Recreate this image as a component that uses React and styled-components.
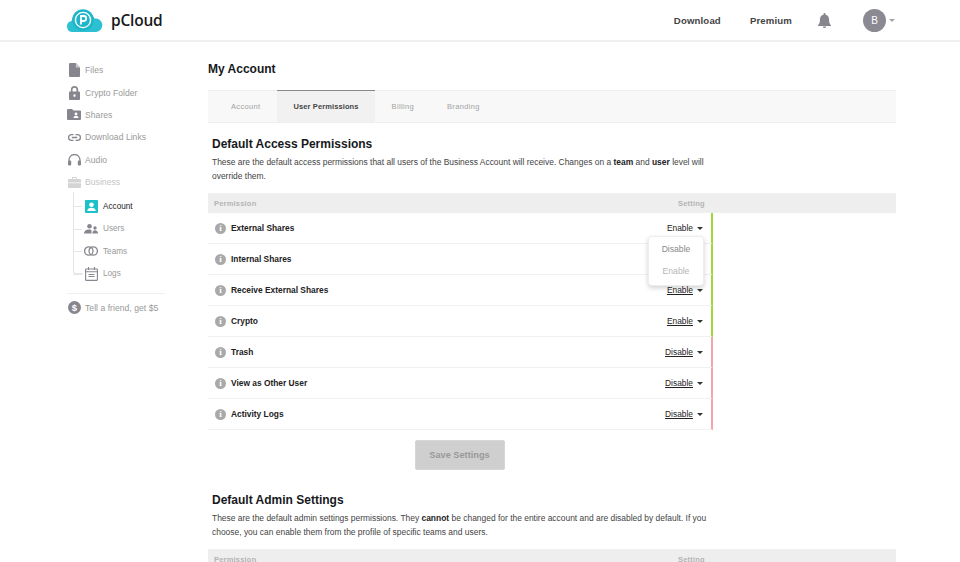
import React from 'react'
import styled, { createGlobalStyle } from 'styled-components'

const GlobalStyle = createGlobalStyle`
  html, body {
    margin: 0;
    padding: 0;
    height: 562px;
    overflow: hidden;
    background: #fff;
    font-family: "Liberation Sans", Arial, sans-serif;
  }
`

const Page = styled.div`
  width: 960px;
  height: 562px;
  overflow: hidden;
`

const Header = styled.header`
  box-sizing: border-box;
  height: 42px;
  border-bottom: 2px solid #efefef;
  display: flex;
  align-items: center;
  padding: 0 65px 0 67px;
`

const LogoBox = styled.div`
  display: flex;
  align-items: center;
  flex: 1;
  gap: 8px;
`

const LogoText = styled.span`
  font-family: "Open Sans", sans-serif;
  font-size: 15.5px;
  font-weight: 600;
  color: #17191c;
  letter-spacing: -0.2px;
  margin-top: -1px;
`

const NavLink = styled.span`
  font-size: 9.6px;
  font-weight: 700;
  color: #444;
  letter-spacing: 0.15px;
  margin-right: ${p => p.$gap}px;
`

const Bell = styled.svg`
  width: 13px;
  height: 15px;
  margin-right: 32px;
  margin-left: -1px;
  fill: #87868e;
`

const Avatar = styled.div`
  width: 23px;
  height: 23px;
  border-radius: 50%;
  background: #8b8a92;
  color: #fff;
  font-size: 10px;
  display: flex;
  align-items: center;
  justify-content: center;
`

const Caret = styled.span`
  width: 0;
  height: 0;
  border-left: ${p => p.$size || 3}px solid transparent;
  border-right: ${p => p.$size || 3}px solid transparent;
  border-top: ${p => p.$size || 3}px solid ${p => p.$color || '#333'};
  display: inline-block;
  margin-left: ${p => p.$gap || 4}px;
`

const Body = styled.div`
  display: flex;
  padding: 17px 64px 0 67px;
`

const Sidebar = styled.aside`
  width: 98px;
  margin-right: 43px;
  flex-shrink: 0;
`

const NavItem = styled.div`
  height: 22.4px;
  display: flex;
  align-items: center;
  font-size: 8.6px;
  letter-spacing: 0.03px;
  color: ${p => (p.$faded ? '#c4c4c4' : '#999')};
  gap: 4px;
`

const IconSlot = styled.span`
  width: 14px;
  height: 14px;
  display: flex;
  align-items: center;
  justify-content: center;
  flex-shrink: 0;
`

const SubNav = styled.div`
  position: relative;
  margin-left: 6px;
  padding-left: 11px;
  margin-top: 1.5px;
`

const TreeLine = styled.div`
  position: absolute;
  left: 0;
  top: -3px;
  bottom: 11px;
  width: 9px;
  border-left: 1px solid #e6e6e6;
  border-bottom: 1px solid #e6e6e6;
  border-bottom-left-radius: 3px;
`

const SubItem = styled.div`
  position: relative;
  height: 22.5px;
  display: flex;
  align-items: center;
  gap: 5px;
  font-size: 8.2px;
  color: ${p => (p.$active ? '#222' : '#999')};

  &::before {
    content: '';
    position: absolute;
    left: -11px;
    top: 50%;
    width: 9px;
    border-top: 1px solid #e6e6e6;
  }
`

const SubIcon = styled.span`
  width: 14px;
  height: 14px;
  display: flex;
  align-items: center;
  justify-content: center;
  flex-shrink: 0;
`

const Divider = styled.div`
  border-top: 1px solid #eee;
  margin: 8px 0 2.5px;
`

const Main = styled.main`
  flex: 1;
  min-width: 0;
`

const PageTitle = styled.h1`
  margin: 0;
  padding-top: 3px;
  height: 28px;
  font-size: 12px;
  line-height: 14px;
  font-weight: 700;
  color: #17191c;
`

const Tabs = styled.div`
  height: 31px;
  background: #f8f8f8;
  border-top: 1px solid #eee;
  border-bottom: 1px solid #eee;
  display: flex;
  padding-left: 6.5px;
`

const Tab = styled.div`
  box-sizing: border-box;
  height: 32px;
  margin-top: -1px;
  padding: 0 16.5px;
  display: flex;
  align-items: center;
  font-size: 7.5px;
  letter-spacing: ${p => (p.$active ? '0.1px' : '0.35px')};
  font-weight: ${p => (p.$active ? 700 : 400)};
  color: ${p => (p.$active ? '#444' : '#a3a3a3')};
  background: ${p => (p.$active ? '#f1f1f1' : 'transparent')};
  border-top: ${p => (p.$active ? '1px solid #888' : '1px solid transparent')};
`

const Section = styled.section`
  padding-top: ${p => p.$top || 0}px;
`

const SectionTitle = styled.h2`
  margin: 0;
  padding-left: 4px;
  font-size: 12px;
  line-height: 15px;
  font-weight: 700;
  color: #17191c;
`

const Intro = styled.p`
  margin: 3px 0 0;
  padding-left: 4px;
  width: 500px;
  font-size: 8.45px;
  line-height: 14px;
  color: #444;

  b {
    color: #222;
  }
`

const TableHead = styled.div`
  height: 20px;
  background: #eee;
  display: flex;
  align-items: center;
  padding-left: 6px;
  margin-top: 10px;
  font-size: 7.5px;
  font-weight: 700;
  letter-spacing: 0.2px;
  color: #b4b4b4;
`

const HeadLeft = styled.span`
  width: 464px;
`

const Rows = styled.div`
  position: relative;
  width: 505px;
`

const Row = styled.div`
  height: 30px;
  border-bottom: 1px solid #f1f1f1;
  border-right: 2px solid ${p => (p.$on ? '#a3d639' : '#f5a3ad')};
  display: flex;
  align-items: center;
  padding-left: 7px;
`

const InfoIcon = styled.span`
  width: 11px;
  height: 11px;
  border-radius: 50%;
  background: #a9a9a9;
  color: #fff;
  font-family: "Liberation Serif", serif;
  font-size: 9px;
  font-weight: 700;
  line-height: 11px;
  text-align: center;
  margin-right: 5px;
  flex-shrink: 0;
`

const RowLabel = styled.span`
  flex: 1;
  font-size: 8.4px;
  font-weight: 700;
  color: #222;
`

const Choice = styled.span`
  display: flex;
  align-items: center;
  font-size: 8.4px;
  color: #222;
  padding-right: 8px;
`

const ChoiceText = styled.span`
  text-decoration: ${p => (p.$plain ? 'none' : 'underline')};
`

const Menu = styled.div`
  position: absolute;
  left: 440px;
  top: 23px;
  width: 56px;
  height: 50px;
  padding-bottom: 2px;
  box-sizing: border-box;
  background: #fff;
  border: 1px solid #eee;
  border-radius: 4px;
  box-shadow: 0 2px 5px rgba(0, 0, 0, 0.18);
  display: flex;
  flex-direction: column;
  align-items: center;
  justify-content: center;
  gap: 12px;
  font-size: 8.6px;
`

const MenuOption = styled.span`
  color: ${p => (p.$off ? '#b5b5b5' : '#888')};
  line-height: 10px;
`

const ButtonRow = styled.div`
  width: 503px;
  display: flex;
  justify-content: center;
  margin-top: 10px;
  margin-bottom: 23px;
`

const SaveButton = styled.button`
  width: 90px;
  height: 30px;
  border: 1px solid #d6d6d6;
  border-radius: 2px;
  background: #cfcfcf;
  color: #999;
  font-family: inherit;
  font-size: 9.2px;
  font-weight: 700;
  padding: 0;
`

const icons = {
  file: <svg width="11" height="14" viewBox="0 0 12 14" preserveAspectRatio="none" fill="#87868e"><path d="M1 0h6.500L12 4.500V13a1 1 0 0 1-1 1H1a1 1 0 0 1-1-1V1a1 1 0 0 1 1-1z" /><path d="M7.500 0v4.500H12z" fill="#c9c9cd" /></svg>,
  lock: <svg width="11" height="14" viewBox="0 0 12 14" preserveAspectRatio="none" fill="#87868e"><path fillRule="evenodd" d="M1 5.500h1V4a4 4 0 0 1 8 0v1.500h1a1 1 0 0 1 1 1V13a1 1 0 0 1-1 1H1a1 1 0 0 1-1-1V6.500a1 1 0 0 1 1-1zM3.800 5.500h4.400V4a2.200 2.200 0 0 0-4.400 0zM6 8.300a1.300 1.300 0 1 0 0 2.600a1.300 1.300 0 0 0 0-2.600z" /></svg>,
  share: <svg width="14" height="11" viewBox="0 0 14 11" fill="#87868e"><path fillRule="evenodd" d="M0 1a1 1 0 0 1 1-1h4l1.500 1.500H13a1 1 0 0 1 1 1V10a1 1 0 0 1-1 1H1a1 1 0 0 1-1-1zM9 3.500a1.400 1.400 0 1 0 0 2.800a1.400 1.400 0 0 0 0-2.800zM6.500 9h5c0-1.500-1-2.200-2.500-2.200S6.500 7.500 6.500 9z" /></svg>,
  link: <svg width="13" height="7" viewBox="0 0 13 7" fill="none" stroke="#87868e" strokeWidth="1.300"><path d="M5.500 .7H3.400a2.800 2.800 0 0 0 0 5.600h2.100M7.500 .7h2.100a2.800 2.800 0 0 1 0 5.600H7.500M3.800 3.500h5.400" /></svg>,
  audio: <svg width="13" height="12" viewBox="0 0 13 12" fill="#87868e"><path d="M1 7V6a5.500 5.500 0 0 1 11 0v1" fill="none" stroke="#87868e" strokeWidth="1.300" /><rect x="0" y="6.500" width="3.200" height="5" rx="1" /><rect x="9.800" y="6.500" width="3.200" height="5" rx="1" /></svg>,
  business: <svg width="13" height="11" viewBox="0 0 13 11" fill="#d4d4d4"><path fillRule="evenodd" d="M4 2V1a1 1 0 0 1 1-1h3a1 1 0 0 1 1 1v1h3a1 1 0 0 1 1 1v2.500H0V3a1 1 0 0 1 1-1zM5 1v1h3V1zM0 6.300h13V10a1 1 0 0 1-1 1H1a1 1 0 0 1-1-1z" /></svg>,
  account: <svg width="13" height="13" viewBox="0 0 13 13"><rect width="13" height="13" rx="1" fill="#1cc0c9" /><circle cx="6.500" cy="4.700" r="2.300" fill="#fff" /><path d="M2.300 11c0-2.200 1.900-3.300 4.200-3.300s4.200 1.100 4.200 3.300z" fill="#fff" /></svg>,
  users: <svg width="14" height="10" viewBox="0 0 14 10" fill="#87868e"><circle cx="5.500" cy="2.300" r="2.300" /><path d="M0 9.500c0-2.700 2.500-4 5-4c1.300 0 2 .3 2.500.6V9.500z" /><circle cx="11" cy="4" r="1.700" /><path d="M8.300 9.500c0-2 .9-3.300 2.700-3.300s3 1.300 3 3.300z" /></svg>,
  teams: <svg width="14" height="10" viewBox="0 0 14 10" fill="none" stroke="#87868e" strokeWidth="1.300"><circle cx="4.800" cy="5" r="4.200" /><circle cx="9.200" cy="5" r="4.200" /></svg>,
  logs: <svg width="13" height="14" viewBox="0 0 13 14" fill="none" stroke="#87868e" strokeWidth="1.100"><rect x=".6" y="2" width="11.800" height="11.400" rx=".6" /><path d="M.6 4.800h11.800M3.500 0v3M9.500 0v3" /><path d="M3.500 7.500h6M3.500 9.500h6" /></svg>,
  dollar: <svg width="13" height="13" viewBox="0 0 13 13"><circle cx="6.500" cy="6.500" r="6.500" fill="#87868e" /><text x="6.500" y="9.800" fontSize="9.500" fontWeight="700" fill="#fff" textAnchor="middle" fontFamily="Liberation Sans">$</text></svg>,
}

const mainNav = [
  ['file', 'Files'],
  ['lock', 'Crypto Folder'],
  ['share', 'Shares'],
  ['link', 'Download Links'],
  ['audio', 'Audio'],
]

const subNav = [
  ['account', 'Account', true],
  ['users', 'Users'],
  ['teams', 'Teams'],
  ['logs', 'Logs'],
]

const rows = [
  ['External Shares', 'Enable', true, true],
  ['Internal Shares', 'Enable', true],
  ['Receive External Shares', 'Enable', true],
  ['Crypto', 'Enable', true],
  ['Trash', 'Disable', false],
  ['View as Other User', 'Disable', false],
  ['Activity Logs', 'Disable', false],
]

const Logo = () => (
  <svg width="36" height="24" viewBox="0 0 36 24">
    <path d="M5.500 24a5.500 5.500 0 0 1-1-10.900A12 12 0 0 1 27.500 10.500a6.800 6.800 0 0 1 2 13.500z" fill="#2cc1d2" />
    <circle cx="16" cy="12" r="10.800" fill="#1fb6c9" />
    <circle cx="16" cy="12" r="7.600" fill="none" stroke="#fff" strokeWidth="1.400" />
    <path d="M14 16.500V8h2.700a2.500 2.500 0 0 1 0 5H14" fill="none" stroke="#fff" strokeWidth="1.800" />
  </svg>
)

const App = () => {
  return (
    <Page>
      <GlobalStyle />
      <Header>
        <LogoBox>
          <Logo />
          <LogoText>pCloud</LogoText>
        </LogoBox>
        <NavLink $gap={29}>Download</NavLink>
        <NavLink $gap={27}>Premium</NavLink>
        <Bell viewBox="0 0 13 15">
          <path d="M6.500 0a1 1 0 0 1 1 1v.7A4.500 4.500 0 0 1 11 6c0 3.500 .7 5 2 6.300V13H0v-.7C1.300 11 2 9.500 2 6a4.500 4.500 0 0 1 3.500-4.300V1a1 1 0 0 1 1-1z" />
          <path d="M4.800 13.500h3.400a1.700 1.500 0 0 1-3.400 0z" />
        </Bell>
        <Avatar>B</Avatar>
        <Caret $size={3.500} $color="#a5a5a5" $gap={3} />
      </Header>
      <Body>
        <Sidebar>
          {mainNav.map(([icon, label]) => (
            <NavItem key={label}>
              <IconSlot>{icons[icon]}</IconSlot>
              {label}
            </NavItem>
          ))}
          <NavItem $faded>
            <IconSlot>{icons.business}</IconSlot>
            Business
          </NavItem>
          <SubNav>
            <TreeLine />
            {subNav.map(([icon, label, active]) => (
              <SubItem key={label} $active={active}>
                <SubIcon>{icons[icon]}</SubIcon>
                {label}
              </SubItem>
            ))}
          </SubNav>
          <Divider />
          <NavItem>
            <IconSlot>{icons.dollar}</IconSlot>
            Tell a friend, get $5
          </NavItem>
        </Sidebar>
        <Main>
          <PageTitle>My Account</PageTitle>
          <Tabs>
            <Tab>Account</Tab>
            <Tab $active>User Permissions</Tab>
            <Tab>Billing</Tab>
            <Tab>Branding</Tab>
          </Tabs>
          <Section $top={14}>
            <SectionTitle>Default Access Permissions</SectionTitle>
            <Intro>
              These are the default access permissions that all users of the Business Account will receive. Changes on a <b>team</b> and <b>user</b> level will override them.
            </Intro>
            <TableHead>
              <HeadLeft>Permission</HeadLeft>
              Setting
            </TableHead>
            <Rows>
              {rows.map(([label, value, on, plain]) => (
                <Row key={label} $on={on}>
                  <InfoIcon>i</InfoIcon>
                  <RowLabel>{label}</RowLabel>
                  <Choice>
                    <ChoiceText $plain={plain}>{value}</ChoiceText>
                    <Caret />
                  </Choice>
                </Row>
              ))}
              <Menu>
                <MenuOption>Disable</MenuOption>
                <MenuOption $off>Enable</MenuOption>
              </Menu>
            </Rows>
            <ButtonRow>
              <SaveButton>Save Settings</SaveButton>
            </ButtonRow>
          </Section>
          <Section>
            <SectionTitle>Default Admin Settings</SectionTitle>
            <Intro>
              These are the default admin settings permissions. They <b>cannot</b> be changed for the entire account and are disabled by default. If you choose, you can enable them from the profile of specific teams and users.
            </Intro>
            <TableHead>
              <HeadLeft>Permission</HeadLeft>
              Setting
            </TableHead>
          </Section>
        </Main>
      </Body>
    </Page>
  )
}

export default App
